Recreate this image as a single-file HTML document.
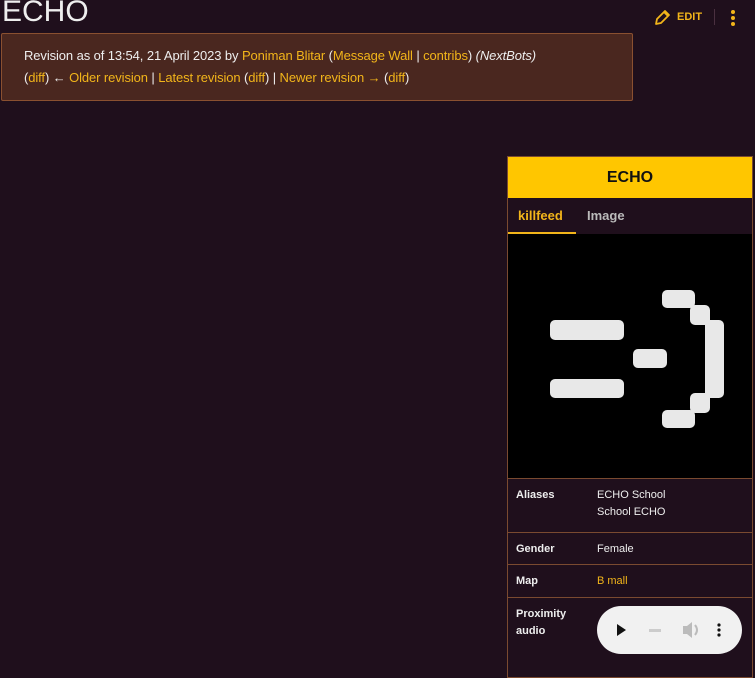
<!DOCTYPE html><html><head><style>
body{margin:0;width:755px;height:663px;background:#1f0f1c;font-family:"Liberation Sans",sans-serif;position:relative;overflow:hidden;color:#eee}
.a{position:absolute}
.y{color:#f2b51a}
.bar{position:absolute;background:#e8e8e8;border-radius:5px}
.row{position:absolute;left:508px;width:244px;border-top:1px solid #7a4a30;font-size:11px}
.row b{position:absolute;left:8px;top:8px;color:#eee;line-height:17px}
.row span{position:absolute;left:89px;top:8px;line-height:17px}
</style></head><body>
<div class="a" style="left:2px;top:-5px;font-size:30px;color:#eee;font-weight:300">ECHO</div>
<div class="a" style="left:654px;top:8px;width:18px;height:18px">
<svg width="18" height="18" viewBox="0 0 18 18"><path d="M2 16 L3 11 L11 3 L15 7 L7 15 Z M10 4 L14 8" fill="none" stroke="#f2b51a" stroke-width="1.8" stroke-linejoin="round"/></svg></div>
<div class="a y" style="left:677px;top:11px;font-size:11px;font-weight:bold">EDIT</div>
<div class="a" style="left:714px;top:9px;width:1px;height:16px;background:#4a3040"></div>
<div class="a" style="left:731px;top:10px;width:4px;height:4px;border-radius:2px;background:#f2b51a;box-shadow:0 6px 0 #f2b51a,0 12px 0 #f2b51a"></div>
<div class="a" style="left:1px;top:33px;width:630px;height:66px;background:#4a271f;border:1px solid #8a5030;border-radius:2px;font-size:13px;line-height:22px">
<div style="position:absolute;left:22px;top:11px;white-space:nowrap;letter-spacing:-0.1px">Revision as of 13:54, 21 April 2023 by <span class="y">Poniman Blitar</span> (<span class="y">Message Wall</span> | <span class="y">contribs</span>) <i>(NextBots)</i><br>(<span class="y">diff</span>) ← <span class="y">Older revision</span> | <span class="y">Latest revision</span> (<span class="y">diff</span>) | <span class="y">Newer revision →</span> (<span class="y">diff</span>)</div></div>
<div class="a" style="left:507px;top:156px;width:244px;height:520px;border:1px solid #7a4a30;background:#1f0f1c"></div>
<div class="a" style="left:508px;top:157px;width:244px;height:41px;background:#ffc600;color:#111;font-weight:bold;font-size:16px;text-align:center;line-height:41px">ECHO</div>
<div class="a y" style="left:518px;top:208px;font-size:13px;font-weight:bold">killfeed</div>
<div class="a" style="left:587px;top:208px;font-size:13px;font-weight:bold;color:#bbb">Image</div>
<div class="a" style="left:508px;top:232px;width:68px;height:2px;background:#f2b51a"></div>
<div class="a" style="left:508px;top:234px;width:244px;height:244px;background:#000"></div>
<div class="bar" style="left:550px;top:320px;width:74px;height:20px"></div>
<div class="bar" style="left:550px;top:379px;width:74px;height:19px"></div>
<div class="bar" style="left:633px;top:349px;width:34px;height:19px"></div>
<div class="bar" style="left:662px;top:290px;width:33px;height:18px"></div>
<div class="bar" style="left:690px;top:305px;width:20px;height:20px"></div>
<div class="bar" style="left:705px;top:320px;width:19px;height:78px"></div>
<div class="bar" style="left:690px;top:393px;width:20px;height:20px"></div>
<div class="bar" style="left:662px;top:410px;width:33px;height:18px"></div>
<div class="row" style="top:478px;height:54px"><b>Aliases</b><span>ECHO School<br>School ECHO</span></div>
<div class="row" style="top:532px;height:32px"><b>Gender</b><span>Female</span></div>
<div class="row" style="top:564px;height:33px"><b>Map</b><span class="y">B mall</span></div>
<div class="row" style="top:597px;height:70px"><b>Proximity<br>audio</b></div>
<div class="a" style="left:597px;top:606px;width:145px;height:48px;border-radius:24px;background:#f1f1f1">
<svg width="145" height="48"><path d="M20 18 L29 24 L20 30Z" fill="#111"/><rect x="52" y="23" width="12" height="3" fill="#ccc"/><path d="M86 20h4l5-4v16l-5-4h-4z" fill="#bbb"/><path d="M98 19q4 5 0 10" stroke="#bbb" stroke-width="2" fill="none"/><circle cx="122" cy="19" r="1.6" fill="#111"/><circle cx="122" cy="24" r="1.6" fill="#111"/><circle cx="122" cy="29" r="1.6" fill="#111"/></svg></div>
</body></html>
